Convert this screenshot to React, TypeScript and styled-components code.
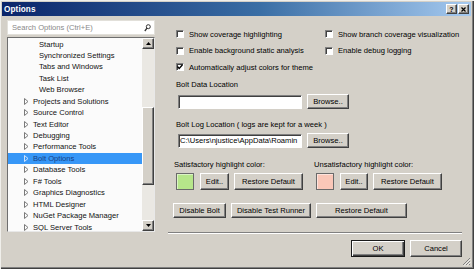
import React from "react";
import styled, { createGlobalStyle, css } from "styled-components";

const GlobalStyle = createGlobalStyle`
  html, body {
    margin: 0;
    padding: 0;
    background: #d4d0c8;
  }
  body {
    font-family: "Liberation Sans", Arial, sans-serif;
    font-size: 7.6px;
    color: #000;
  }
`;

const raised = css`
  background: #d4d0c8;
  border: 1px solid;
  border-color: #ffffff #404040 #404040 #ffffff;
  box-shadow: inset -1px -1px 0 #808080;
`;

const sunken = css`
  border: 1px solid;
  border-color: #808080 #ffffff #ffffff #808080;
  box-shadow: inset 1px 1px 0 #404040;
`;

const Window = styled.div`
  position: relative;
  width: 474px;
  height: 269px;
  box-sizing: border-box;
  background: #d4d0c8;
  box-shadow: inset 1px 1px 0 #f0efeb, inset -1px -1px 0 #404040,
    inset -2px -2px 0 #808080;
  overflow: hidden;
`;

const TitleBar = styled.div`
  display: flex;
  align-items: center;
  height: 14px;
  margin: 2px 3px 0 2px;
  padding: 0 2px 0 2px;
  background: linear-gradient(90deg, #0a246a 0%, #3a6ea5 55%, #a6caf0 100%);
`;

const TitleText = styled.span`
  color: #fff;
  font-weight: bold;
  font-size: 8.2px;
  letter-spacing: 0.1px;
`;

const CaptionButtons = styled.div`
  display: flex;
  gap: 1px;
  margin-left: auto;
`;

const CaptionButton = styled.div`
  ${raised};
  width: 9px;
  height: 8px;
  display: flex;
  align-items: center;
  justify-content: center;
  font-weight: bold;
  font-size: 7px;
  line-height: 1;
`;

const Body = styled.div`
  display: grid;
  grid-template-columns: 148px 1fr;
  column-gap: 13px;
  padding: 4px 12px 0 7px;
`;

const LeftPane = styled.div`
  display: flex;
  flex-direction: column;
  gap: 2px;
`;

const SearchBox = styled.div`
  display: flex;
  align-items: center;
  justify-content: space-between;
  height: 15px;
  box-sizing: border-box;
  padding: 0 3px 0 4px;
  background: #fff;
  border: 1px solid #e2e0da;
  color: #8a8a8a;
`;

const Tree = styled.div`
  display: flex;
  height: 195px;
  box-sizing: border-box;
  background: #fbfbfb;
  border: 1px solid;
  border-color: #6e6e6e #e8e8e8 #e8e8e8 #6e6e6e;
`;

const TreeList = styled.div`
  flex: 1;
  padding-top: 0.3px;
  overflow: hidden;
`;

const TreeRow = styled.div<{ $child?: boolean; $selected?: boolean }>`
  display: flex;
  align-items: center;
  height: 11.44px;
  padding-left: ${(p) => (p.$child ? "31px" : "8px")};
  white-space: nowrap;
  color: ${(p) => (p.$selected ? "#163f85" : "#111")};
  background: ${(p) => (p.$selected ? "#3797f7" : "transparent")};
`;

const Expander = styled.span`
  display: flex;
  align-items: center;
  width: 17px;
  padding-left: 8px;
  box-sizing: border-box;
  flex: none;
`;

const Scrollbar = styled.div`
  display: flex;
  flex-direction: column;
  width: 12px;
  background: #eae8e3;
`;

const ScrollButton = styled.div`
  ${raised};
  height: 11px;
  box-sizing: border-box;
  display: flex;
  align-items: center;
  justify-content: center;
  flex: none;
`;

const ScrollTrack = styled.div`
  flex: 1;
  padding-top: 58px;
`;

const ScrollThumb = styled.div`
  ${raised};
  height: 78px;
  box-sizing: border-box;
`;

const RightPane = styled.div`
  display: flex;
  flex-direction: column;
`;

const CheckGrid = styled.div`
  display: grid;
  grid-template-columns: 149px 1fr;
  grid-auto-rows: 16.5px;
  margin-top: 6px;
  padding-left: 8px;
`;

const CheckItem = styled.label`
  display: flex;
  align-items: center;
  gap: 5px;
  white-space: nowrap;
`;

const CheckBox = styled.span`
  ${sunken};
  width: 8px;
  height: 8px;
  box-sizing: border-box;
  background: #fff;
  display: flex;
  align-items: center;
  justify-content: center;
`;

const FieldLabel = styled.div<{ $gap: number }>`
  height: 9px;
  line-height: 9px;
  margin-top: ${(p) => p.$gap}px;
  padding-left: 8px;
  white-space: nowrap;
`;

const PathRow = styled.div<{ $gap: number }>`
  display: flex;
  align-items: center;
  gap: 5px;
  height: 15px;
  margin-top: ${(p) => p.$gap}px;
  padding-left: 10px;
`;

const TextInput = styled.div`
  ${sunken};
  width: 124px;
  height: 14px;
  box-sizing: border-box;
  background: #fff;
  padding: 0 1px;
  line-height: 12px;
  white-space: nowrap;
  overflow: hidden;
  flex: none;
`;

const Button = styled.div<{ $w: number; $h?: number; $default?: boolean }>`
  ${raised};
  width: ${(p) => p.$w}px;
  height: ${(p) => p.$h ?? 15}px;
  box-sizing: border-box;
  display: flex;
  align-items: center;
  justify-content: center;
  white-space: nowrap;
  flex: none;
  ${(p) =>
    p.$default &&
    css`
      border-color: #1a1a1a;
      box-shadow: inset 1px 1px 0 #fff, inset -1px -1px 0 #404040,
        inset -2px -2px 0 #808080;
    `}
`;

const ColorGrid = styled.div`
  display: grid;
  grid-template-columns: 140px 1fr;
  margin-top: 11.5px;
  padding-left: 6px;
`;

const ColorGroup = styled.div`
  display: flex;
  flex-direction: column;
  gap: 4.5px;
`;

const ColorLabel = styled.div`
  height: 9px;
  line-height: 9px;
  white-space: nowrap;
`;

const ColorRow = styled.div`
  display: flex;
  align-items: center;
  gap: 5px;
  height: 17px;
  padding-left: 2px;
`;

const Swatch = styled.div<{ $color: string }>`
  width: 18px;
  height: 17px;
  box-sizing: border-box;
  background: ${(p) => p.$color};
  border: 1px solid #6a6a6a;
  box-shadow: inset 1px 1px 0 rgba(255, 255, 255, 0.5);
  margin-right: 1px;
`;

const ActionRow = styled.div`
  display: flex;
  gap: 5px;
  margin-top: 13px;
  padding-left: 5px;
`;

const Separator = styled.div`
  margin-top: 14px;
  height: 1px;
  background: #808080;
  border-bottom: 1px solid #fff;
`;

const Footer = styled.div`
  display: flex;
  justify-content: flex-end;
  gap: 5px;
  margin-top: 6px;
`;

const Grip = styled.svg`
  position: absolute;
  right: 3px;
  bottom: 3px;
`;

type Node = { label: string; child?: boolean; selected?: boolean };

const nodes: Node[] = [
  { label: "Startup", child: true },
  { label: "Synchronized Settings", child: true },
  { label: "Tabs and Windows", child: true },
  { label: "Task List", child: true },
  { label: "Web Browser", child: true },
  { label: "Projects and Solutions" },
  { label: "Source Control" },
  { label: "Text Editor" },
  { label: "Debugging" },
  { label: "Performance Tools" },
  { label: "Bolt Options", selected: true },
  { label: "Database Tools" },
  { label: "F# Tools" },
  { label: "Graphics Diagnostics" },
  { label: "HTML Designer" },
  { label: "NuGet Package Manager" },
  { label: "SQL Server Tools" },
];

const Arrow = ({ light }: { light?: boolean }) => (
  <svg width="5" height="7" viewBox="0 0 5 7">
    <path d="M0.5 0.5 L4 3.5 L0.5 6.5 Z" fill="none" stroke={light ? "#cfe3fb" : "#7a7a7a"} strokeWidth="1" />
  </svg>
);

const Tick = () => (
  <svg width="6" height="6" viewBox="0 0 6 6">
    <path d="M0.5 2.5 L2.2 4.5 L5.5 0.8" fill="none" stroke="#000" strokeWidth="1.3" />
  </svg>
);

const Check = ({ label, checked }: { label: string; checked?: boolean }) => (
  <CheckItem>
    <CheckBox>{checked && <Tick />}</CheckBox>
    {label}
  </CheckItem>
);

const App = () => {
  return (
    <>
      <GlobalStyle />
      <Window>
        <TitleBar>
          <TitleText>Options</TitleText>
          <CaptionButtons>
            <CaptionButton>?</CaptionButton>
            <CaptionButton>
              <svg width="5" height="5" viewBox="0 0 5 5">
                <path d="M0.5 0.5 L4.5 4.5 M4.5 0.5 L0.5 4.5" stroke="#000" strokeWidth="1.2" />
              </svg>
            </CaptionButton>
          </CaptionButtons>
        </TitleBar>

        <Body>
          <LeftPane>
            <SearchBox>
              <span>Search Options (Ctrl+E)</span>
              <svg width="7" height="8" viewBox="0 0 7 8">
                <circle cx="4.3" cy="2.7" r="2" fill="none" stroke="#333" strokeWidth="1" />
                <path d="M3 4.2 L0.8 7" stroke="#333" strokeWidth="1.3" />
              </svg>
            </SearchBox>
            <Tree>
              <TreeList>
                {nodes.map((n) => (
                  <TreeRow key={n.label} $child={n.child} $selected={n.selected}>
                    {!n.child && (
                      <Expander>
                        <Arrow light={n.selected} />
                      </Expander>
                    )}
                    {n.label}
                  </TreeRow>
                ))}
              </TreeList>
              <Scrollbar>
                <ScrollButton>
                  <svg width="5" height="3" viewBox="0 0 5 3">
                    <path d="M0 3 L2.5 0 L5 3 Z" fill="#000" />
                  </svg>
                </ScrollButton>
                <ScrollTrack>
                  <ScrollThumb />
                </ScrollTrack>
                <ScrollButton>
                  <svg width="5" height="3" viewBox="0 0 5 3">
                    <path d="M0 0 L2.5 3 L5 0 Z" fill="#000" />
                  </svg>
                </ScrollButton>
              </Scrollbar>
            </Tree>
          </LeftPane>

          <RightPane>
            <CheckGrid>
              <Check label="Show coverage highlighting" />
              <Check label="Show branch coverage visualization" />
              <Check label="Enable background static analysis" />
              <Check label="Enable debug logging" />
              <Check label="Automatically adjust colors for theme" checked />
            </CheckGrid>

            <FieldLabel $gap={4}>Bolt Data Location</FieldLabel>
            <PathRow $gap={5.5}>
              <TextInput />
              <Button $w={42}>Browse..</Button>
            </PathRow>

            <FieldLabel $gap={10.5}>Bolt Log Location ( logs are kept for a week )</FieldLabel>
            <PathRow $gap={4.5}>
              <TextInput>C:\Users\njustice\AppData\Roamin</TextInput>
              <Button $w={42}>Browse..</Button>
            </PathRow>

            <ColorGrid>
              <ColorGroup>
                <ColorLabel>Satisfactory highlight color:</ColorLabel>
                <ColorRow>
                  <Swatch $color="#b6e68a" />
                  <Button $w={29} $h={17}>Edit..</Button>
                  <Button $w={69} $h={17}>Restore Default</Button>
                </ColorRow>
              </ColorGroup>
              <ColorGroup>
                <ColorLabel>Unsatisfactory highlight color:</ColorLabel>
                <ColorRow>
                  <Swatch $color="#fac7b8" />
                  <Button $w={28} $h={17}>Edit..</Button>
                  <Button $w={69} $h={17}>Restore Default</Button>
                </ColorRow>
              </ColorGroup>
            </ColorGrid>

            <ActionRow>
              <Button $w={53}>Disable Bolt</Button>
              <Button $w={80}>Disable Test Runner</Button>
              <Button $w={91}>Restore Default</Button>
            </ActionRow>

            <Separator />

            <Footer>
              <Button $w={54} $h={17} $default>OK</Button>
              <Button $w={52} $h={17}>Cancel</Button>
            </Footer>
          </RightPane>
        </Body>

        <Grip width="9" height="9" viewBox="0 0 9 9">
          <path d="M8 1 L1 8 M8 4 L4 8 M8 7 L7 8" stroke="#808080" strokeWidth="1" />
          <path d="M8.8 1.8 L1.8 8.8 M8.8 4.8 L4.8 8.8" stroke="#fff" strokeWidth="0.8" />
        </Grip>
      </Window>
    </>
  );
};

export default App;
